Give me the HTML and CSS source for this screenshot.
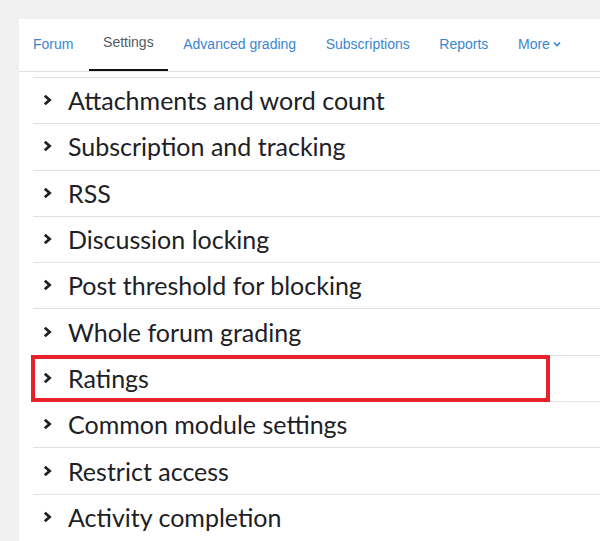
FILE: index.html
```html
<!DOCTYPE html>
<html lang="en">
<head>
<meta charset="utf-8">
<title>Forum settings</title>
<link rel="stylesheet" href="styles.css">
</head>
<body>
<div class="panel">
  <nav class="tabs">
    <a class="tab">Forum</a>
    <a class="tab active">Settings</a>
    <a class="tab">Advanced grading</a>
    <a class="tab">Subscriptions</a>
    <a class="tab">Reports</a>
    <a class="tab">More<svg class="caret" width="8" height="6" viewBox="0 0 8 6"><path d="M1 1.5 L4 4.5 L7 1.5" fill="none" stroke="currentColor" stroke-width="1.7"/></svg></a>
  </nav>
  <div class="sections">
    <div class="row"><svg class="chev" width="9" height="12" viewBox="0 0 9 12"><path d="M1.8 1.8 L6.6 6 L1.8 10.2" fill="none" stroke="#1d2125" stroke-width="2.8"/></svg><span>Attachments and word count</span></div>
    <div class="row"><svg class="chev" width="9" height="12" viewBox="0 0 9 12"><path d="M1.8 1.8 L6.6 6 L1.8 10.2" fill="none" stroke="#1d2125" stroke-width="2.8"/></svg><span>Subscription and tracking</span></div>
    <div class="row"><svg class="chev" width="9" height="12" viewBox="0 0 9 12"><path d="M1.8 1.8 L6.6 6 L1.8 10.2" fill="none" stroke="#1d2125" stroke-width="2.8"/></svg><span>RSS</span></div>
    <div class="row"><svg class="chev" width="9" height="12" viewBox="0 0 9 12"><path d="M1.8 1.8 L6.6 6 L1.8 10.2" fill="none" stroke="#1d2125" stroke-width="2.8"/></svg><span>Discussion locking</span></div>
    <div class="row"><svg class="chev" width="9" height="12" viewBox="0 0 9 12"><path d="M1.8 1.8 L6.6 6 L1.8 10.2" fill="none" stroke="#1d2125" stroke-width="2.8"/></svg><span>Post threshold for blocking</span></div>
    <div class="row"><svg class="chev" width="9" height="12" viewBox="0 0 9 12"><path d="M1.8 1.8 L6.6 6 L1.8 10.2" fill="none" stroke="#1d2125" stroke-width="2.8"/></svg><span>Whole forum grading</span></div>
    <div class="row"><svg class="chev" width="9" height="12" viewBox="0 0 9 12"><path d="M1.8 1.8 L6.6 6 L1.8 10.2" fill="none" stroke="#1d2125" stroke-width="2.8"/></svg><span>Ratings</span></div>
    <div class="row"><svg class="chev" width="9" height="12" viewBox="0 0 9 12"><path d="M1.8 1.8 L6.6 6 L1.8 10.2" fill="none" stroke="#1d2125" stroke-width="2.8"/></svg><span>Common module settings</span></div>
    <div class="row"><svg class="chev" width="9" height="12" viewBox="0 0 9 12"><path d="M1.8 1.8 L6.6 6 L1.8 10.2" fill="none" stroke="#1d2125" stroke-width="2.8"/></svg><span>Restrict access</span></div>
    <div class="row"><svg class="chev" width="9" height="12" viewBox="0 0 9 12"><path d="M1.8 1.8 L6.6 6 L1.8 10.2" fill="none" stroke="#1d2125" stroke-width="2.8"/></svg><span>Activity completion</span></div>
  </div>
</div>
<div class="highlight"></div>
</body>
</html>
```
FILE: styles.css
```css
html, body {
  margin: 0;
  padding: 0;
  height: 100%;
  overflow: hidden;
}
body {
  background: #f0f0f0;
  padding: 19px 0 0 19px;
  box-sizing: border-box;
  position: relative;
}
.panel {
  background: #ffffff;
  height: 100%;
}
.tabs {
  display: flex;
  gap: 1.6px;
  height: 52px;
  border-bottom: 1px solid #dee2e6;
  font-family: "Liberation Sans", Arial, sans-serif;
  font-size: 14px;
}
.tab {
  display: flex;
  align-items: center;
  padding: 0 14px 1px;
  color: #3a86d0;
  box-sizing: border-box;
  border-bottom: 2px solid transparent;
}
.tab.active {
  color: #555a60;
  border-bottom-color: #111111;
  padding-bottom: 4px;
}
.caret {
  margin-left: 3px;
  margin-top: 1px;
}
.sections {
  margin-top: 5px;
  margin-left: 14px;
}
.row {
  display: flex;
  align-items: center;
  height: 46.3px;
  box-sizing: border-box;
  border-top: 1px solid #dee2e6;
  padding-bottom: 1px;
  font-family: Lato, "Open Sans", sans-serif;
  font-size: 25px;
  color: #1d2125;
}
.chev {
  margin-left: 10px;
  margin-right: 16px;
  flex: none;
}
.highlight {
  position: absolute;
  left: 31px;
  top: 355px;
  width: 519px;
  height: 47px;
  box-sizing: border-box;
  border: 4px solid #e8202a;
}
```
